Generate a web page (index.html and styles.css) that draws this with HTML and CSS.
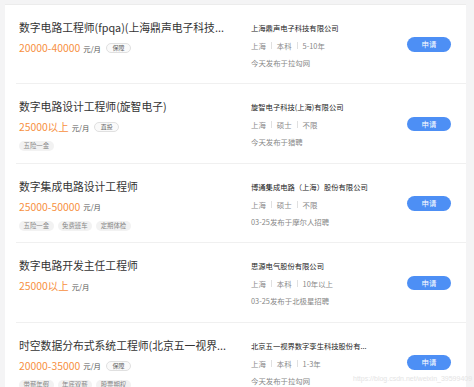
FILE: index.html
```html
<!DOCTYPE html>
<html lang="zh-CN">
<head>
<meta charset="utf-8">
<title>职位列表</title>
<link rel="stylesheet" href="styles.css">
</head>
<body>
<div class="card">
  <div class="job">
    <div class="left">
      <div class="title">数字电路工程师(fpqa)(上海鼎声电子科技...</div>
      <div class="pay"><span class="salary">20000-40000</span><span class="unit">元/月</span><span class="badge">保障</span></div>
    </div>
    <div class="info">
      <div class="company">上海鼎声电子科技有限公司</div>
      <div class="meta">上海<i class="sep"></i>本科<i class="sep"></i>5-10年</div>
      <div class="meta">今天发布于拉勾网</div>
    </div>
    <button class="apply">申请</button>
  </div>
  <div class="job">
    <div class="left">
      <div class="title">数字电路设计工程师(旋智电子)</div>
      <div class="pay"><span class="salary">25000以上</span><span class="unit">元/月</span><span class="badge">直投</span></div>
      <div class="tags"><span class="tag">五险一金</span></div>
    </div>
    <div class="info">
      <div class="company">旋智电子科技(上海)有限公司</div>
      <div class="meta">上海<i class="sep"></i>硕士<i class="sep"></i>不限</div>
      <div class="meta">今天发布于猎聘</div>
    </div>
    <button class="apply">申请</button>
  </div>
  <div class="job">
    <div class="left">
      <div class="title">数字集成电路设计工程师</div>
      <div class="pay"><span class="salary">25000-50000</span><span class="unit">元/月</span></div>
      <div class="tags"><span class="tag">五险一金</span><span class="tag">免费班车</span><span class="tag">定期体检</span></div>
    </div>
    <div class="info">
      <div class="company">博通集成电路（上海）股份有限公司</div>
      <div class="meta">上海<i class="sep"></i>硕士<i class="sep"></i>不限</div>
      <div class="meta">03-25发布于摩尔人招聘</div>
    </div>
    <button class="apply">申请</button>
  </div>
  <div class="job">
    <div class="left">
      <div class="title">数字电路开发主任工程师</div>
      <div class="pay"><span class="salary">25000以上</span><span class="unit">元/月</span></div>
    </div>
    <div class="info">
      <div class="company">思源电气股份有限公司</div>
      <div class="meta">上海<i class="sep"></i>本科<i class="sep"></i>10年以上</div>
      <div class="meta">03-25发布于北极星招聘</div>
    </div>
    <button class="apply">申请</button>
  </div>
  <div class="job">
    <div class="left">
      <div class="title">时空数据分布式系统工程师(北京五一视界...</div>
      <div class="pay"><span class="salary">20000-35000</span><span class="unit">元/月</span><span class="badge">保障</span></div>
      <div class="tags"><span class="tag">带薪年假</span><span class="tag">年底双薪</span><span class="tag">股票期权</span></div>
    </div>
    <div class="info">
      <div class="company">北京五一视界数字孪生科技股份有...</div>
      <div class="meta">上海<i class="sep"></i>本科<i class="sep"></i>1-3年</div>
      <div class="meta">今天发布于拉勾网</div>
    </div>
    <button class="apply">申请</button>
  </div>
</div>
<div class="watermark">https://blog.csdn.net/weixin_39599409</div>
</body>
</html>
```
FILE: styles.css
```css
html, body {
  margin: 0;
  padding: 0;
}
body {
  background: #f4f4f5;
  font-family: "Noto Sans CJK SC", "Noto Sans", sans-serif;
  color: #333;
  width: 474px;
  height: 387px;
  overflow: hidden;
  position: relative;
}
.card {
  background: #fff;
  margin: 4px 0 0 5px;
  width: 461px;
  border-top: 1px solid #ececec;
}
.job {
  margin-left: 11px;
  height: 79.4px;
  box-sizing: border-box;
  border-bottom: 1px solid #f0f0f0;
  display: grid;
  grid-template-columns: 235px 1fr 44px;
  align-items: start;
  padding-right: 15px;
}
.left {
  padding: 15px 0 0 3px;
  min-width: 0;
}
.title {
  font-size: 10.8px;
  line-height: 15px;
  color: #333;
  white-space: nowrap;
}
.pay {
  margin-top: 6px;
  height: 14px;
  display: flex;
  align-items: center;
}
.salary {
  font-size: 10.4px;
  line-height: 14px;
  color: #f7903f;
}
.unit {
  font-size: 7.4px;
  color: #555;
  margin-left: 3px;
}
.badge {
  font-size: 6px;
  line-height: 8px;
  color: #666;
  border: 1px solid #e0e0e0;
  background: #fafafa;
  border-radius: 5px;
  padding: 0 5.5px;
  margin-left: 5px;
}
.tags {
  margin-top: 7px;
  display: flex;
  gap: 4px;
}
.tag {
  font-size: 6.4px;
  line-height: 10px;
  color: #888;
  background: #f2f2f2;
  border-radius: 5px;
  padding: 0 4.5px;
}
.info {
  padding-top: 18px;
  min-width: 0;
}
.company {
  font-size: 7.3px;
  line-height: 11px;
  color: #222;
  white-space: nowrap;
}
.meta {
  margin-top: 6px;
  font-size: 7.4px;
  line-height: 11px;
  color: #888;
  white-space: nowrap;
  display: flex;
  align-items: center;
}
.sep {
  display: inline-block;
  width: 1px;
  height: 7px;
  background: #e0e0e0;
  margin: 0 5px;
}
.apply {
  align-self: center;
  margin-top: 1px;
  width: 44px;
  height: 14.5px;
  border: none;
  border-radius: 8px;
  background: #4d8ff5;
  color: #fff;
  font-family: "Noto Sans CJK SC", sans-serif;
  font-size: 7.4px;
  line-height: 14.5px;
  padding: 0;
}
.watermark {
  position: absolute;
  left: 353px;
  top: 375px;
  font-family: "Liberation Sans", sans-serif;
  font-size: 7px;
  color: #e4e4e4;
  white-space: nowrap;
}
```
